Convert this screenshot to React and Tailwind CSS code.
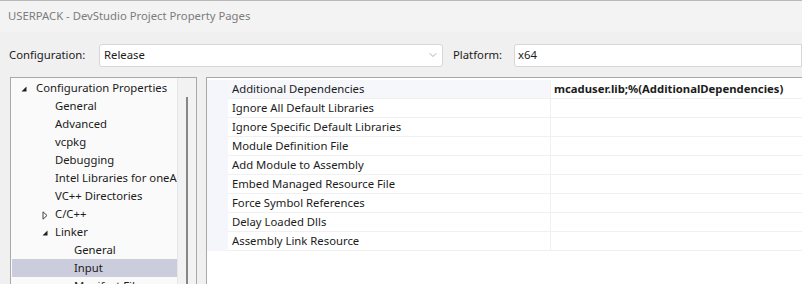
import { ChevronDown } from 'lucide-react'

const font = { fontFamily: '"Noto Sans", "Open Sans", sans-serif' }

const tree = [
  { label: 'Configuration Properties', level: 0, toggle: 'open' },
  { label: 'General', level: 1 },
  { label: 'Advanced', level: 1 },
  { label: 'vcpkg', level: 1 },
  { label: 'Debugging', level: 1 },
  { label: 'Intel Libraries for oneAPI', level: 1 },
  { label: 'VC++ Directories', level: 1 },
  { label: 'C/C++', level: 1, toggle: 'closed' },
  { label: 'Linker', level: 1, toggle: 'open' },
  { label: 'General', level: 2 },
  { label: 'Input', level: 2, selected: true },
  { label: 'Manifest File', level: 2 },
]

const props = [
  ['Additional Dependencies', 'mcaduser.lib;%(AdditionalDependencies)'],
  ['Ignore All Default Libraries', ''],
  ['Ignore Specific Default Libraries', ''],
  ['Module Definition File', ''],
  ['Add Module to Assembly', ''],
  ['Embed Managed Resource File', ''],
  ['Force Symbol References', ''],
  ['Delay Loaded Dlls', ''],
  ['Assembly Link Resource', ''],
]

function Toggle({ kind }) {
  if (kind === 'open') {
    return (
      <svg width="6" height="6" viewBox="0 0 6 6" className="shrink-0">
        <path d="M5.5 0.5 L5.5 5.5 L0.5 5.5 Z" fill="#1e1e1e" />
      </svg>
    )
  }
  return (
    <svg width="6" height="9" viewBox="0 0 6 9" className="shrink-0">
      <path d="M1 0.8 L5 4.5 L1 8.2 Z" fill="none" stroke="#444" strokeWidth="1" />
    </svg>
  )
}

export default function App() {
  return (
    <div
      className="w-[802px] h-[284px] overflow-hidden bg-[#f0f0f0] border-t border-[#b9b9b9] text-[11.3px] text-[#1b1b1b] flex flex-col"
      style={font}
    >
      <div className="h-[31px] shrink-0 pl-[8px] flex items-center text-[#7c7c7c] bg-[#f3f3f3]">
        USERPACK - DevStudio Project Property Pages
      </div>

      <div className="h-[45px] shrink-0 flex items-center pl-[9px] pt-[1px]">
        <span className="w-[90px]">Configuration:</span>
        <div className="w-[344px] h-[23px] bg-white border border-[#d6d6d6] rounded-[3px] flex items-center pl-[4px] pr-[3px]">
          <span className="flex-1">Release</span>
          <ChevronDown size={12} strokeWidth={1.2} className="text-[#7a7a7a]" />
        </div>
        <span className="ml-[10px] w-[61px]">Platform:</span>
        <div className="flex-1 h-[23px] bg-white border border-[#d6d6d6] rounded-l-[3px] flex items-center pl-[3px]">
          x64
        </div>
      </div>

      <div className="flex-1 flex min-h-0">
        <div className="ml-[10px] w-[187px] border-l border-t border-r border-[#a9a9a9] bg-[#fafafa] flex min-h-0">
          <div className="flex-1 pt-[1px] pl-[1px] min-w-0 overflow-hidden">
            {tree.map((n, i) => (
              <div
                key={i}
                className={`h-[18px] flex items-center whitespace-nowrap ${n.selected ? 'bg-[#cbccdc]' : ''}`}
                style={{ paddingLeft: 24 + n.level * 19 }}
              >
                <span className="w-0 relative">
                  {n.toggle && (
                    <span
                      className={`absolute top-[-4px] flex items-center h-[10px] ${n.level === 0 ? 'left-[-15px]' : 'left-[-13px]'}`}
                    >
                      <Toggle kind={n.toggle} />
                    </span>
                  )}
                </span>
                {n.label}
              </div>
            ))}
          </div>
          <div className="w-[19px] shrink-0 bg-[#f2f2f2] border-l border-[#e6e6e6] flex justify-center pt-[19px]">
            <div className="w-[2px] h-full bg-[#878787]" />
          </div>
        </div>

        <div className="ml-[9px] flex-1 border-l border-t border-[#a9a9a9] bg-white flex flex-col pt-[2px]">
          {props.map(([k, v], i) => (
            <div key={i} className="h-[19px] flex">
              <div className="w-[21px] shrink-0 bg-[#f4f6fb]" />
              <div
                className={`w-[323px] shrink-0 flex items-center pl-[4px] border-b border-r border-[#f0f0f0] ${i === 0 ? 'bg-[#f5f7fb]' : ''}`}
              >
                {k}
              </div>
              <div className="flex-1 flex items-center pl-[3px] border-b border-[#f0f0f0] font-bold whitespace-nowrap">
                {v}
              </div>
            </div>
          ))}
        </div>
      </div>
    </div>
  )
}
